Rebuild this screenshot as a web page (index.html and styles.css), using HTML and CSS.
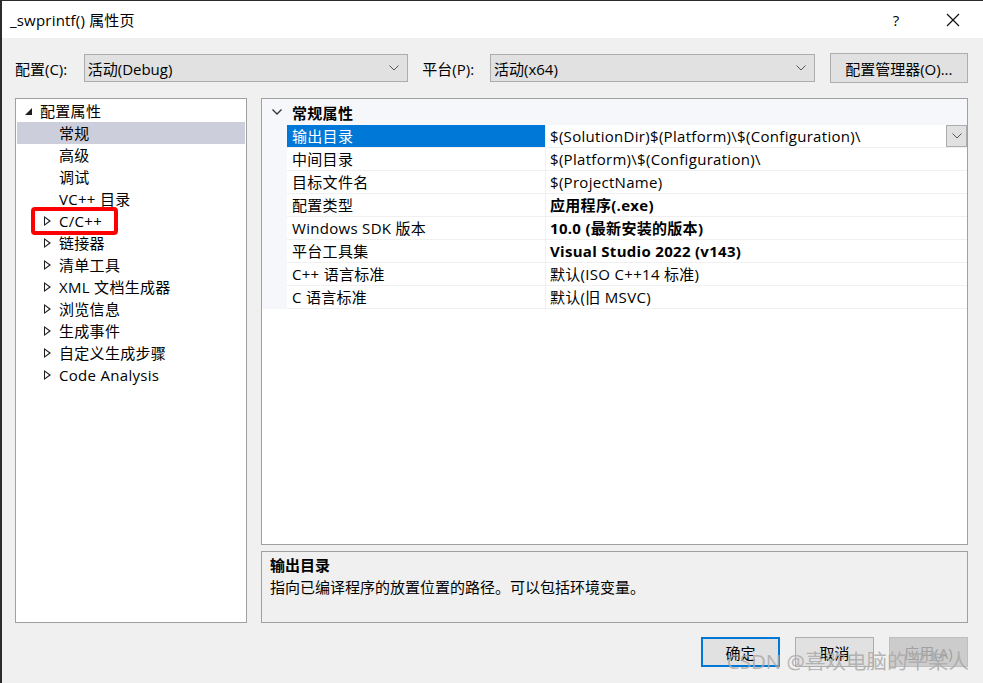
FILE: index.html
```html
<!DOCTYPE html>
<html>
<head>
    <meta charset="utf-8">
    <link rel="stylesheet" href="styles.css">
    <title>_swprintf() 属性页</title>
</head>
<body>
<div class="window">
    <div class="titlebar">
        <span class="title">_swprintf() 属性页</span>
        <span class="help">?</span>
        <span class="close">
            <svg width="14" height="14" viewBox="0 0 14 14"><path d="M1 1L13 13M13 1L1 13" stroke="#111" stroke-width="1.2" fill="none"/></svg>
        </span>
    </div>
    <div class="content">
        <div class="toolbar">
            <span class="label">配置(C):</span>
            <div class="combo">
                <span>活动(Debug)</span>
                <svg class="chev" width="10" height="6" viewBox="0 0 10 6"><path d="M0.5 0.5L5 5L9.5 0.5" stroke="#555" stroke-width="1" fill="none"/></svg>
            </div>
            <span class="label label2">平台(P):</span>
            <div class="combo">
                <span>活动(x64)</span>
                <svg class="chev" width="10" height="6" viewBox="0 0 10 6"><path d="M0.5 0.5L5 5L9.5 0.5" stroke="#555" stroke-width="1" fill="none"/></svg>
            </div>
            <div class="btn mgr">配置管理器(O)...</div>
        </div>

        <div class="main">
            <div class="tree">
                <div class="node root"><span class="tri-open"></span>配置属性</div>
                <div class="node child selected">常规</div>
                <div class="node child">高级</div>
                <div class="node child">调试</div>
                <div class="node child">VC++ 目录</div>
                <div class="node folder marked"><span class="tri"></span>C/C++</div>
                <div class="node folder"><span class="tri"></span>链接器</div>
                <div class="node folder"><span class="tri"></span>清单工具</div>
                <div class="node folder"><span class="tri"></span>XML 文档生成器</div>
                <div class="node folder"><span class="tri"></span>浏览信息</div>
                <div class="node folder"><span class="tri"></span>生成事件</div>
                <div class="node folder"><span class="tri"></span>自定义生成步骤</div>
                <div class="node folder"><span class="tri"></span>Code Analysis</div>
            </div>

            <div class="right">
                <div class="grid">
                    <div class="cat">
                        <span class="cat-icon">
                            <svg width="10" height="6" viewBox="0 0 10 6"><path d="M0.5 0.5L5 5L9.5 0.5" stroke="#333" stroke-width="1.3" fill="none"/></svg>
                        </span>
                        <span class="cat-name">常规属性</span>
                    </div>
                    <div class="row">
                        <span class="gutter"></span>
                        <span class="name active">输出目录</span>
                        <span class="value">$(SolutionDir)$(Platform)\$(Configuration)\
                            <span class="drop"><svg width="10" height="6" viewBox="0 0 10 6"><path d="M0.5 0.5L5 5L9.5 0.5" stroke="#555" stroke-width="1" fill="none"/></svg></span>
                        </span>
                    </div>
                    <div class="row">
                        <span class="gutter"></span>
                        <span class="name">中间目录</span>
                        <span class="value">$(Platform)\$(Configuration)\</span>
                    </div>
                    <div class="row">
                        <span class="gutter"></span>
                        <span class="name">目标文件名</span>
                        <span class="value">$(ProjectName)</span>
                    </div>
                    <div class="row">
                        <span class="gutter"></span>
                        <span class="name">配置类型</span>
                        <span class="value bold">应用程序(.exe)</span>
                    </div>
                    <div class="row">
                        <span class="gutter"></span>
                        <span class="name">Windows SDK 版本</span>
                        <span class="value bold">10.0 (最新安装的版本)</span>
                    </div>
                    <div class="row">
                        <span class="gutter"></span>
                        <span class="name">平台工具集</span>
                        <span class="value bold">Visual Studio 2022 (v143)</span>
                    </div>
                    <div class="row">
                        <span class="gutter"></span>
                        <span class="name">C++ 语言标准</span>
                        <span class="value">默认(ISO C++14 标准)</span>
                    </div>
                    <div class="row">
                        <span class="gutter"></span>
                        <span class="name">C 语言标准</span>
                        <span class="value">默认(旧 MSVC)</span>
                    </div>
                </div>
                <div class="desc">
                    <div class="desc-title">输出目录</div>
                    <div class="desc-text">指向已编译程序的放置位置的路径。可以包括环境变量。</div>
                </div>
            </div>
        </div>

        <div class="footer">
            <div class="btn ok">确定</div>
            <div class="btn">取消</div>
            <div class="btn disabled">应用(A)</div>
        </div>
    </div>
    <div class="watermark">CSDN @喜欢电脑的平某人</div>
</div>
</body>
</html>
```

FILE: styles.css
```css
body{
    margin: 0;
    font-family: "Open Sans", "Noto Sans CJK SC", sans-serif;
    font-size: 15px;
    color: #000;
    background: #f0f0f0;
}

.window{
    position: relative;
    width: 981px;
    height: 682px;
    border-left: 2px solid #2b2b2b;
    border-top: 1px solid #2b2b2b;
    background: #f0f0f0;
    overflow: hidden;
}

.titlebar{
    height: 37px;
    background: #fff;
    display: flex;
    align-items: center;
    padding-left: 8px;
}
.title{
    flex: 1;
    letter-spacing: 0.2px;
}
.help{
    width: 20px;
    text-align: center;
    margin-right: 40px;
}
.close{
    width: 14px;
    height: 14px;
    margin-right: 23px;
    display: flex;
}

.content{
    padding: 0 15px 0 13px;
}

.toolbar{
    display: flex;
    align-items: center;
    height: 60px;
}
.label{
    width: 69px;
}
.label2{
    margin-left: 14px;
    width: 68px;
}
.combo{
    width: 321px;
    height: 26px;
    border: 1px solid #adadad;
    background: #e1e1e1;
    display: flex;
    align-items: center;
    padding-left: 3px;
}
.combo span{
    flex: 1;
}
.chev{
    margin-right: 8px;
}
.btn{
    width: 77px;
    height: 28px;
    border: 1px solid #adadad;
    background: #e1e1e1;
    display: flex;
    align-items: center;
    justify-content: center;
}
.mgr{
    width: 137px;
    margin-left: 15px;
}

.main{
    display: flex;
    gap: 14px;
    height: 525px;
}

.tree{
    width: 232px;
    border: 1px solid #a0a0a0;
    background: #fff;
    padding: 1px;
    box-sizing: border-box;
}
.node{
    height: 22px;
    line-height: 22px;
    position: relative;
    white-space: nowrap;
    letter-spacing: 0.3px;
}
.root{
    padding-left: 23px;
}
.child,
.folder{
    padding-left: 42px;
}
.selected{
    background: #cccedb;
}
.tri-open{
    position: absolute;
    left: 8px;
    top: 8px;
    width: 0;
    height: 0;
    border-left: 7px solid transparent;
    border-bottom: 7px solid #1e1e1e;
}
.tri{
    position: absolute;
    left: 27px;
    top: 6px;
    width: 6px;
    height: 9px;
}
.tri::before{
    content: "";
    position: absolute;
    left: 0;
    top: 0;
    border-top: 5px solid transparent;
    border-bottom: 5px solid transparent;
    border-left: 7px solid #1e1e1e;
}
.tri::after{
    content: "";
    position: absolute;
    left: 1px;
    top: 2px;
    border-top: 3px solid transparent;
    border-bottom: 3px solid transparent;
    border-left: 4px solid #fff;
}
.marked::after{
    content: "";
    position: absolute;
    left: 14px;
    top: -3px;
    width: 79px;
    height: 20px;
    border: 4px solid #f00;
    border-radius: 4px;
}

.right{
    flex: 1;
    display: flex;
    flex-direction: column;
    gap: 6px;
}

.grid{
    height: 447px;
    border: 1px solid #a0a0a0;
    background: #fff;
    box-sizing: border-box;
}
.cat{
    height: 26px;
    display: flex;
    align-items: center;
    background: #f5f7fa;
}
.cat-icon{
    width: 30px;
    display: flex;
    justify-content: center;
}
.cat-name{
    font-weight: bold;
    letter-spacing: 0.3px;
}
.row{
    display: flex;
    height: 23px;
    line-height: 22px;
}
.gutter{
    width: 25px;
    background: #f5f7fa;
}
.name{
    width: 259px;
    padding-left: 5px;
    box-sizing: border-box;
    border-bottom: 1px solid #f0f0f0;
    border-right: 1px solid #f0f0f0;
    white-space: nowrap;
    letter-spacing: 0.3px;
}
.name.active{
    background: #0078d7;
    color: #fff;
}
.value{
    flex: 1;
    padding-left: 4px;
    border-bottom: 1px solid #f0f0f0;
    position: relative;
    white-space: nowrap;
    letter-spacing: 0.3px;
}
.bold{
    font-weight: bold;
}
.drop{
    position: absolute;
    right: 0;
    top: 0;
    width: 19px;
    height: 20px;
    border: 1px solid #adadad;
    background: #e1e1e1;
    display: flex;
    align-items: center;
    justify-content: center;
}

.desc{
    flex: 1;
    border: 1px solid #a0a0a0;
    padding: 1px 8px;
}
.desc-title{
    font-weight: bold;
    height: 23px;
    line-height: 24px;
}
.desc-text{
    line-height: 22px;
}

.footer{
    display: flex;
    justify-content: flex-end;
    gap: 15px;
    padding-top: 14px;
}
.ok{
    border: 2px solid #0078d7;
    width: 75px;
    height: 26px;
}
.disabled{
    background: #cccccc;
    border-color: #bfbfbf;
    color: #a0a0a0;
}

.watermark{
    position: absolute;
    right: 14px;
    bottom: 8px;
    font-size: 20.5px;
    color: rgba(170, 170, 170, 0.85);
    white-space: nowrap;
}
```
